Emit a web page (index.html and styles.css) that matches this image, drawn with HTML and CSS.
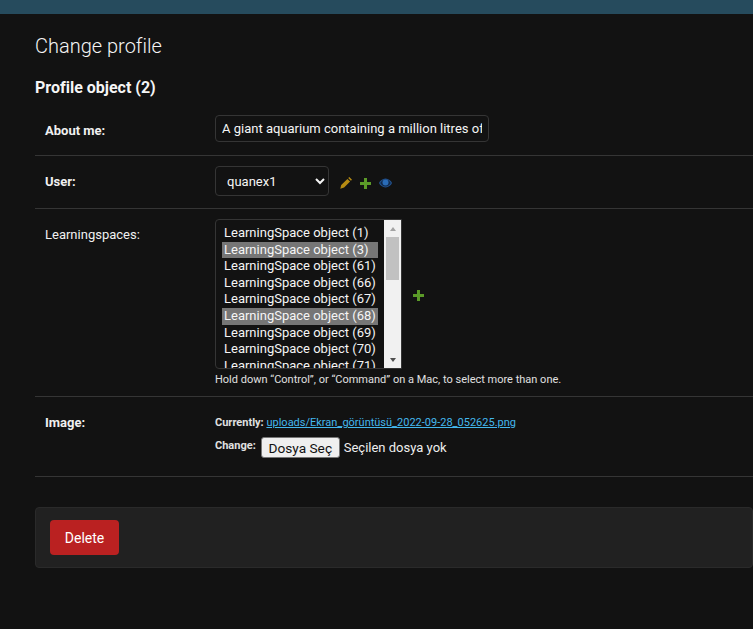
FILE: index.html
```html
<!DOCTYPE html>
<html lang="tr">
<head>
<meta charset="utf-8">
<title>Change profile</title>
<link rel="stylesheet" href="styles.css">
</head>
<body>
<header class="topbar"></header>
<main class="content">
  <h1 class="title">Change profile</h1>
  <h2 class="subtitle">Profile object (2)</h2>
  <form class="form">
    <div class="row row-about">
      <label class="label strong">About me:</label>
      <input class="text-input" type="text" value="A giant aquarium containing a million litres of water">
    </div>
    <div class="row row-user">
      <label class="label strong">User:</label>
      <div class="field-inline">
        <select class="select"><option>quanex1</option></select>
        <div class="icons">
          <svg class="icon" width="12" height="12" viewBox="0 0 12 12"><path fill="#b58a12" d="M9.300 0l2.700 2.700-1.100 1.100-2.700-2.700zM7.400 1.900l2.700 2.700-6 6L.3 11.700l.9-3.800z"/></svg>
          <svg class="icon" width="11" height="11" viewBox="0 0 11 11"><path fill="#5b9a28" d="M4 0h3v4h4v3H7v4H4V7H0V4h4z"/></svg>
          <svg class="icon eye" width="13" height="10" viewBox="0 0 13 10"><path fill="#22528f" d="M6.500 .5C3.500 .5 1 2.700 0 5c1 2.300 3.500 4.500 6.500 4.500S12 7.300 13 5C12 2.700 9.500 .5 6.500 .5z"/><path fill="#122a4a" d="M6.500 1.500C4.200 1.500 2.200 3.200 1.200 5c1 1.800 3 3.500 5.300 3.500s4.300-1.700 5.300-3.500C10.800 3.200 8.800 1.500 6.500 1.500z"/><circle cx="6.500" cy="4.500" r="3" fill="#2a6cb8"/></svg>
        </div>
      </div>
    </div>
    <div class="row row-spaces">
      <label class="label">Learningspaces:</label>
      <div class="field-stack">
        <div class="field-inline">
          <div class="listbox" role="listbox" aria-multiselectable="true">
            <ul class="options">
              <li class="option">LearningSpace object (1)</li>
              <li class="option selected">LearningSpace object (3)</li>
              <li class="option">LearningSpace object (61)</li>
              <li class="option">LearningSpace object (66)</li>
              <li class="option">LearningSpace object (67)</li>
              <li class="option selected">LearningSpace object (68)</li>
              <li class="option">LearningSpace object (69)</li>
              <li class="option">LearningSpace object (70)</li>
              <li class="option">LearningSpace object (71)</li>
            </ul>
            <div class="scrollbar">
              <div class="scroll-btn"><span class="arrow-up"></span></div>
              <div class="thumb"></div>
              <div class="scroll-fill"></div>
              <div class="scroll-btn"><span class="arrow-down"></span></div>
            </div>
          </div>
          <svg class="icon add-space" width="11" height="11" viewBox="0 0 11 11"><path fill="#5b9a28" d="M4 0h3v4h4v3H7v4H4V7H0V4h4z"/></svg>
        </div>
        <p class="help">Hold down “Control”, or “Command” on a Mac, to select more than one.</p>
      </div>
    </div>
    <div class="row row-image">
      <label class="label strong">Image:</label>
      <div class="file-field">
        <p class="file-line"><span class="file-key">Currently:</span> <a class="file-link" href="#">uploads/Ekran_görüntüsü_2022-09-28_052625.png</a></p>
        <p class="file-line change-line"><span class="file-key">Change:</span> <button class="file-btn" type="button">Dosya Seç</button><span class="file-none">Seçilen dosya yok</span></p>
      </div>
    </div>
  </form>
  <div class="actions">
    <a class="delete" href="#">Delete</a>
  </div>
</main>
</body>
</html>
```
FILE: styles.css
```css
* { box-sizing: border-box; }
html, body { height: 100%; }
body {
  margin: 0;
  background: #121212;
  color: #eeeeee;
  font-family: Roboto, "Liberation Sans", sans-serif;
  font-size: 14px;
  overflow: hidden;
}
.topbar { height: 14px; background: #264b5d; }
.content { padding: 20px 0 0 35px; }
.title { margin: 0; font-size: 20px; font-weight: 300; line-height: 24px; color: #f5f5f5; }
.subtitle { margin: 20px 0 0; font-size: 16px; font-weight: 700; line-height: 20px; color: #f5f5f5; }
.form { margin-top: 5px; }
.row {
  display: flex;
  align-items: flex-start;
  padding: 10px;
  border-bottom: 1px solid #353535;
}
.label { width: 170px; flex: none; font-size: 13px; line-height: 16px; color: #f0f0f0; }
.strong { font-weight: 700; }
.row-about { height: 53px; padding-top: 8px; }
.row-about .label { padding-top: 12px; }
.row-user { height: 53px; padding-top: 10px; }
.row-user .label { padding-top: 8px; }
.row-spaces { height: 188px; }
.row-spaces .label { padding-top: 8px; }
.row-image { height: 80px; padding-top: 18px; }
.text-input {
  width: 274px;
  height: 27px;
  margin-top: 4px;
  padding: 2px 6px;
  background: #121212;
  color: #f5f5f5;
  border: 1px solid #353535;
  border-radius: 4px;
  font: 13px Roboto, sans-serif;
}
.field-inline { display: flex; align-items: center; }
.field-stack { display: flex; flex-direction: column; }
.select {
  width: 114px;
  height: 30px;
  padding: 0 6px 0 7px;
  background: #121212;
  color: #f5f5f5;
  border: 1px solid #353535;
  border-radius: 4px;
  font: 13px Roboto, sans-serif;
  color-scheme: dark;
}
.icons { display: flex; align-items: center; gap: 8px; margin-left: 11px; margin-top: 4px; }
.icon { display: block; flex: none; }
.listbox {
  display: flex;
  width: 187px;
  height: 150px;
  background: #121212;
  color: #f5f5f5;
  border: 1px solid #353535;
  border-radius: 4px 0 0 4px;
  overflow: hidden;
  font-size: 13px;
}
.options {
  flex: 1;
  min-width: 0;
  margin: 0;
  padding: 5px 6px;
  list-style: none;
  overflow: hidden;
}
.option { height: 16.600px; padding: 0 2px; line-height: 16.600px; white-space: nowrap; }
.option.selected { background: #767676; }
.scrollbar {
  display: flex;
  flex-direction: column;
  flex: none;
  width: 17px;
  background: #f1f1f1;
}
.scroll-btn {
  display: flex;
  align-items: center;
  justify-content: center;
  flex: none;
  height: 17px;
}
.arrow-up, .arrow-down { width: 0; height: 0; border-left: 3.500px solid transparent; border-right: 3.500px solid transparent; }
.arrow-up { border-bottom: 4px solid #a3a3a3; }
.arrow-down { border-top: 4px solid #505050; }
.thumb { flex: none; height: 43px; margin: 0 2px; background: #c1c1c1; }
.scroll-fill { flex: 1; }
.add-space { margin-left: 11px; margin-top: 3px; }
.help { margin: 4px 0 0; font-size: 11px; line-height: 14px; color: #e0e0e0; }
.file-field { display: flex; flex-direction: column; padding-top: 1px; }
.file-line { margin: 0; font-size: 11px; line-height: 14px; }
.file-key { font-weight: 700; color: #e0e0e0; }
.file-link { color: #44b8ee; }
.change-line { display: flex; align-items: flex-start; margin-top: 9px; }
.file-btn {
  width: 79px;
  height: 21px;
  margin-left: 5px;
  margin-top: -2px;
  padding: 0;
  background: #efefef;
  color: #111111;
  border: 1px solid #767676;
  border-radius: 3px;
  font: 13.700px Roboto, sans-serif;
}
.file-none { margin-left: 4px; margin-top: -2px; font: 13px/22px Roboto, sans-serif; color: #eeeeee; }
.actions {
  margin-top: 30px;
  padding: 12px 14px;
  height: 61px;
  background: #212121;
  border: 1px solid #2a2a2a;
  border-radius: 4px;
}
.delete {
  display: flex;
  align-items: center;
  justify-content: center;
  width: 69px;
  height: 35px;
  background: #ba2121;
  border-radius: 4px;
  color: #ffffff;
  font-size: 14px;
  text-decoration: none;
}
```
